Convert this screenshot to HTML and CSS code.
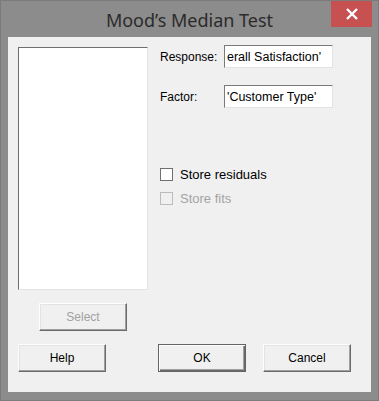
FILE: index.html
```html
<!DOCTYPE html>
<html lang="en">
<head>
    <meta charset="UTF-8">
    <title>Mood's Median Test</title>
    <link rel="stylesheet" href="styles.css">
</head>
<body>
    <div class="window">
        <div class="titlebar">
            <span class="title">Mood’s Median Test</span>
            <div class="close">
                <svg width="14" height="12" viewBox="0 0 14 12">
                    <path d="M2 1 L12 11 M12 1 L2 11" stroke="#fff" stroke-width="2.4" fill="none"/>
                </svg>
            </div>
        </div>
        <div class="client">
            <div class="main">
                <div class="left">
                    <div class="listbox"></div>
                    <button class="btn btn-select" disabled>Select</button>
                </div>
                <div class="right">
                    <div class="field">
                        <span class="label">Response:</span>
                        <div class="textbox">erall Satisfaction'</div>
                    </div>
                    <div class="field">
                        <span class="label">Factor:</span>
                        <div class="textbox">'Customer Type'</div>
                    </div>
                    <div class="checks">
                        <label class="check"><span class="box"></span>Store residuals</label>
                        <label class="check disabled"><span class="box"></span>Store fits</label>
                    </div>
                </div>
            </div>
            <div class="buttons">
                <button class="btn">Help</button>
                <div class="buttons-right">
                    <button class="btn btn-default">OK</button>
                    <button class="btn">Cancel</button>
                </div>
            </div>
        </div>
    </div>
</body>
</html>
```

FILE: styles.css
```css
body {
    margin: 0;
    font-family: "Liberation Sans", Arial, sans-serif;
    font-size: 12px;
}
.window {
    width: 379px;
    height: 401px;
    box-sizing: border-box;
    background: #8c8c8c;
    border: 1px solid #7b7b7b;
    padding: 0 7px 8px 7px;
    display: flex;
    flex-direction: column;
}
.titlebar {
    position: relative;
    height: 37px;
    display: flex;
    align-items: center;
    justify-content: center;
}
.title {
    font-family: "Noto Sans", "Open Sans", sans-serif;
    font-size: 18px;
    color: #2b2b2b;
    margin-top: 1px;
}
.close {
    position: absolute;
    right: -1px;
    top: 0;
    width: 41px;
    height: 26px;
    background: #c75050;
    display: flex;
    align-items: center;
    justify-content: center;
}
.client {
    flex: 1;
    background: #f0f0f0;
    padding: 10px 20px 20px 10px;
    display: flex;
    flex-direction: column;
}
.main {
    display: flex;
    flex: 1;
}
.left {
    width: 130px;
    display: flex;
    flex-direction: column;
    align-items: center;
}
.listbox {
    width: 130px;
    height: 243px;
    box-sizing: border-box;
    background: #fff;
    border: 1px solid;
    border-color: #6e6e6e #e3e3e3 #e3e3e3 #6e6e6e;
}
.right {
    margin-left: 12px;
    margin-top: -2px;
}
.field {
    display: flex;
    align-items: center;
    height: 23px;
    margin-bottom: 17px;
}
.label {
    width: 64px;
    color: #000;
}
.textbox {
    width: 109px;
    height: 23px;
    box-sizing: border-box;
    background: #fff;
    border: 1px solid;
    border-color: #7a7a7a #e3e3e3 #e3e3e3 #7a7a7a;
    padding: 0 2px;
    display: flex;
    align-items: center;
    white-space: nowrap;
    overflow: hidden;
    font-size: 12.5px;
}
.checks {
    margin-top: 59px;
    display: flex;
    flex-direction: column;
    gap: 10px;
}
.check {
    display: flex;
    align-items: center;
    gap: 7px;
    height: 14px;
    color: #000;
    font-size: 13px;
}
.box {
    width: 13px;
    height: 13px;
    box-sizing: border-box;
    background: #fff;
    border: 1px solid #707070;
}
.check.disabled {
    color: #a3a3a3;
}
.check.disabled .box {
    background: #f0f0f0;
    border-color: #bcbcbc;
}
.btn {
    width: 88px;
    height: 28px;
    box-sizing: border-box;
    background: #f0f0f0;
    border: 1px solid;
    border-color: #fdfdfd #6a6a6a #6a6a6a #fdfdfd;
    box-shadow: inset -1px -1px 0 #a0a0a0, inset 1px 1px 0 #e3e3e3;
    font-family: "Liberation Sans", Arial, sans-serif;
    font-size: 12px;
    color: #000;
    padding: 0;
}
.btn-select {
    margin-top: 13px;
    color: #a0a0a0;
}
.btn-default {
    border: 1px solid #646464;
    box-shadow: inset 1px 1px 0 #fdfdfd, inset -1px -1px 0 #6a6a6a, inset -2px -2px 0 #a0a0a0;
}
.buttons {
    display: flex;
    justify-content: space-between;
    margin-top: 13px;
}
.buttons-right {
    display: flex;
    gap: 17px;
}
```
